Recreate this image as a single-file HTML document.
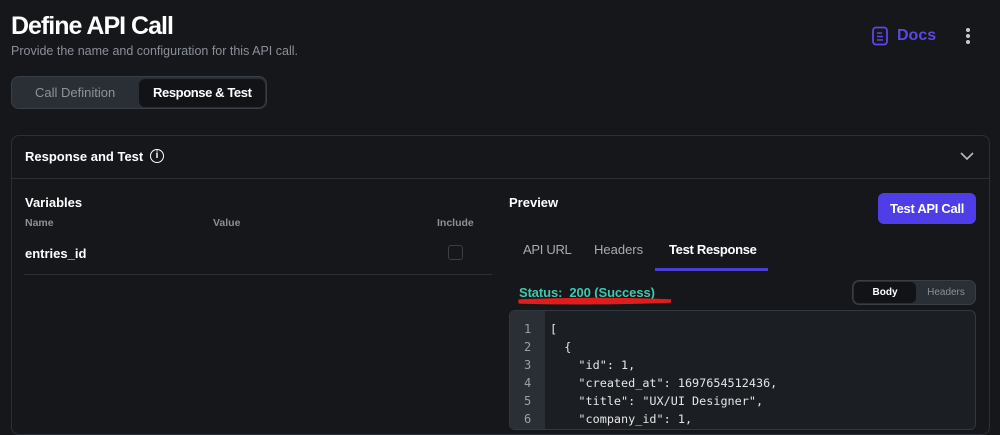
<!DOCTYPE html>
<html><head><style>
*{margin:0;padding:0;box-sizing:border-box}
body{width:1000px;height:421px;overflow:hidden;background:#15171b;font-family:"Liberation Sans",sans-serif;color:#fff;position:relative}
.a{position:absolute;white-space:nowrap}
.mono{font-family:"DejaVu Sans Mono","Liberation Mono",monospace;font-size:11.8px;color:#e6e6e6}
</style></head><body>
<div class="a" style="left:11px;top:12px;font-size:25px;font-weight:bold;letter-spacing:-1px">Define API Call</div>
<div class="a" style="left:11px;top:44px;font-size:12.5px;color:#8b8f97">Provide the name and configuration for this API call.</div>
<div class="a" style="left:11px;top:76px;width:256px;height:33px;background:#2a2e35;border:1px solid #3a3e46;border-radius:8px"></div>
<div class="a" style="left:35px;top:85px;font-size:13px;color:#8e929a">Call Definition</div>
<div class="a" style="left:139px;top:79px;width:126px;height:28px;background:#111316;border-radius:6px"></div>
<div class="a" style="left:153px;top:85px;font-size:13px;font-weight:bold;letter-spacing:-0.4px">Response &amp; Test</div>
<svg class="a" style="left:871px;top:26px" width="18" height="20" viewBox="0 0 18 20"><rect x="2" y="1.5" width="14" height="17" rx="3" fill="none" stroke="#5b48e6" stroke-width="1.8"/><path d="M6 7h5M6 10.5h6M6 14h6" stroke="#5b48e6" stroke-width="1.6"/></svg>
<div class="a" style="left:897px;top:27px;font-size:16px;font-weight:bold;color:#5b48e6">Docs</div>
<div class="a" style="left:966px;top:28px;width:4px;height:4px;background:#ccc;border-radius:2px;box-shadow:0 6px 0 #ccc,0 12px 0 #ccc"></div>
<div class="a" style="left:11px;top:135px;width:979px;height:300px;border:1px solid #2c3036;border-radius:8px"></div>
<div class="a" style="left:12px;top:178px;width:977px;height:1px;background:#2c3036"></div>
<div class="a" style="left:25px;top:149px;font-size:13px;font-weight:bold">Response and Test</div>
<div class="a" style="left:150px;top:149px;width:14px;height:14px;border:1.5px solid #fff;border-radius:50%;font-size:10px;font-weight:bold;text-align:center;line-height:11px">i</div>
<svg class="a" style="left:960px;top:151px" width="14" height="10"><path d="M1 2l6 6 6-6" fill="none" stroke="#bbb" stroke-width="1.6"/></svg>
<div class="a" style="left:25px;top:195px;font-size:13px;font-weight:bold">Variables</div>
<div class="a" style="left:25px;top:217px;font-size:10.5px;font-weight:bold;color:#8b8f97">Name</div>
<div class="a" style="left:213px;top:217px;font-size:10.5px;font-weight:bold;color:#8b8f97">Value</div>
<div class="a" style="left:437px;top:217px;font-size:10.5px;font-weight:bold;color:#8b8f97">Include</div>
<div class="a" style="left:25px;top:246px;font-size:13px;font-weight:bold">entries_id</div>
<div class="a" style="left:448px;top:245px;width:15px;height:15px;border:1.5px solid #3a3e46;border-radius:3px"></div>
<div class="a" style="left:24px;top:274px;width:468px;height:1px;background:#2c3036"></div>
<div class="a" style="left:509px;top:195px;font-size:13px;font-weight:bold">Preview</div>
<div class="a" style="left:878px;top:193px;width:98px;height:31px;background:#4f3ee8;border-radius:6px;font-size:13px;font-weight:bold;text-align:center;line-height:31px;letter-spacing:-0.3px">Test API Call</div>
<div class="a" style="left:523px;top:242px;font-size:13px;color:#a7abb2;letter-spacing:-0.3px">API URL</div>
<div class="a" style="left:594px;top:242px;font-size:13px;color:#a7abb2">Headers</div>
<div class="a" style="left:669px;top:242px;font-size:13px;font-weight:bold;letter-spacing:-0.3px">Test Response</div>
<div class="a" style="left:655px;top:268px;width:113px;height:3px;background:#4a3ed6"></div>
<div class="a" style="left:519px;top:285px;font-size:13px;font-weight:bold;color:#3fc9b0;letter-spacing:-0.1px">Status:&nbsp; 200 (Success)</div>
<svg class="a" style="left:518px;top:295px" width="156" height="12"><path d="M2 6Q80 3 153 6Q80 9 2 7" fill="none" stroke="#e01c1c" stroke-width="3.5" stroke-linecap="round"/></svg>
<div class="a" style="left:852px;top:280px;width:124px;height:25px;background:#2a2e35;border:1px solid #3a3e46;border-radius:7px"></div>
<div class="a" style="left:854px;top:282px;width:62px;height:21px;background:#111316;border-radius:5px;font-size:10px;font-weight:bold;text-align:center;line-height:21px">Body</div>
<div class="a" style="left:918px;top:282px;width:56px;height:21px;font-size:10px;color:#8b8f97;text-align:center;line-height:21px">Headers</div>
<div class="a" style="left:509px;top:310px;width:467px;height:120px;background:#1b1e22;border:1px solid #33373e;border-radius:6px;overflow:hidden">
<div style="position:absolute;left:0;top:0;width:35px;height:120px;background:#2a2e35"></div>
</div>
<div class="a mono" style="left:524px;top:320px;line-height:18px;color:#9aa0a8;font-size:12px">1<br>2<br>3<br>4<br>5<br>6</div>
<div class="a mono" style="left:550px;top:320px;line-height:18px;white-space:pre">[
  {
    "id": 1,
    "created_at": 1697654512436,
    "title": "UX/UI Designer",
    "company_id": 1,</div>
</body></html>
